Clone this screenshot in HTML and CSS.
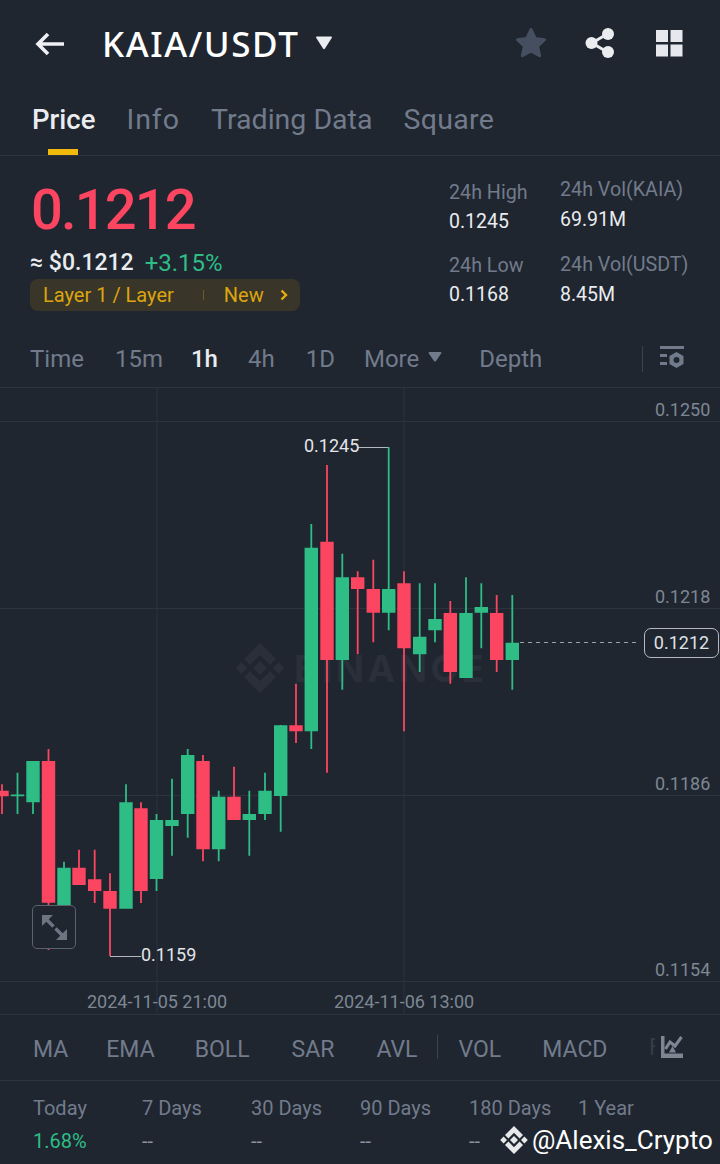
FILE: index.html
```html
<!DOCTYPE html>
<html lang="en">
<head>
<meta charset="utf-8">
<title>KAIA/USDT</title>
<link rel="stylesheet" href="styles.css">
</head>
<body>
<main class="app">
  <header class="topbar">
    <svg class="back" viewBox="0 0 30 24" width="30" height="24"><path d="M29 12H3M13 2 3 12l10 10" /></svg>
    <h1 class="pair">KAIA/USDT</h1>
    <svg class="pair-caret" viewBox="0 0 18 14" width="18" height="14"><path d="M1 1.500Q1 .5 2 .5H16Q17 .5 17 1.500L10 12.500Q9 14 8 12.500Z"/></svg>
    <div class="top-icons">
      <svg class="ic-star" viewBox="0 0 32 32" width="32" height="32"><path d="M16 2.500l4.200 8.900 9.300 1.300-6.900 6.500 2 9.600-8.600-4.900-8.600 4.900 2-9.600-6.900-6.500 9.300-1.300z"/></svg>
      <svg class="ic-share" viewBox="0 0 30 32" width="30" height="32"><path class="ln" d="M7 16 23 6.500M7 16l16 9.500"/><circle cx="6.500" cy="16" r="6"/><circle cx="23" cy="7" r="6"/><circle cx="23" cy="25" r="6"/></svg>
      <svg class="ic-grid" viewBox="0 0 28 28" width="28" height="28"><path d="M1 1h12v12H1zM15.500 1h12v12h-12zM1 15.500h12v12H1zM15.500 15.500h12v12h-12z"/></svg>
    </div>
  </header>

  <nav class="tabs">
    <span class="tab tab-on">Price</span>
    <span class="tab tab-info">Info</span>
    <span class="tab tab-data">Trading Data</span>
    <span class="tab tab-square">Square</span>
  </nav>

  <section class="summary">
    <div class="sum-left">
      <div class="last">0.1212</div>
      <div class="fiat"><span>≈ $0.1212</span><span class="pct">+3.15%</span></div>
      <div class="tag"><span>Layer 1 / Layer</span><i class="tag-sep"></i><span class="tag-new">New</span>
        <svg class="tag-chev" viewBox="0 0 8 12" width="8" height="12"><path d="M1.500 1.500 6 6l-4.500 4.500"/></svg></div>
    </div>
    <div class="stats">
      <div class="stat-col stat-col-a">
        <div class="stat"><span class="stat-k">24h High</span><span class="stat-v">0.1245</span></div>
        <div class="stat"><span class="stat-k">24h Low</span><span class="stat-v">0.1168</span></div>
      </div>
      <div class="stat-col stat-col-b">
        <div class="stat"><span class="stat-k">24h Vol(KAIA)</span><span class="stat-v">69.91M</span></div>
        <div class="stat"><span class="stat-k">24h Vol(USDT)</span><span class="stat-v">8.45M</span></div>
      </div>
    </div>
  </section>

  <nav class="intervals">
    <span class="iv iv-time">Time</span>
    <span class="iv iv-15">15m</span>
    <span class="iv iv-1h iv-on">1h</span>
    <span class="iv iv-4h">4h</span>
    <span class="iv iv-1d">1D</span>
    <span class="iv iv-more">More</span>
    <svg class="iv-caret" viewBox="0 0 14 10" width="14" height="10"><path d="M.500 1Q.500 0 1.500 0h11q1 0 1 1L8 9q-1 1-2 0z"/></svg>
    <span class="iv iv-depth">Depth</span>
    <i class="iv-sep"></i>
    <svg class="iv-set" viewBox="0 0 24 26" width="24" height="26"><path d="M0 0h24v3H0zM0 8h7v3H0zM0 16h7v3H0z"/><path fill-rule="evenodd" d="M16.500 6 23.500 10v8l-7 4-7-4v-8zM16.500 11a3 3 0 1 0 0 6 3 3 0 0 0 0-6z"/></svg>
  </nav>

  <section class="chart">
    <svg class="plot" viewBox="0 388 720 626" width="720" height="626">
      <path class="grid" d="M0 421.500H720M0 608.500H720M0 795.500H720M0 981.500H720M157 388V1014M404 388V1014"/>
      <g class="mark">
        <path d="M260 643l16 16-6 6-10-10-10 10-6-6zM260 693l16-16-6-6-10 10-10-10-6 6zM241.500 662l6 6-6 6-6-6zM278.500 662l6 6-6 6-6-6zM260 661l7 7-7 7-7-7z"/>
        <text x="294" y="682" class="mark-t">BINANCE</text>
      </g>
      <path class="wick up" d="M17.500 772.700V814M33 761V814M64 861.700V905M126 784.300V908M156.500 814V891M172 778.700V855.700M187.700 749V837.700M218.700 790.700V861.300M249.300 790.700V855.700M265 772.700V820M280.700 725V831.700M311.300 524V749M342.300 553.700V689.700M388.700 447V630.300M419.700 583.300V672M435 583.300V642.300M466 577.300V678M481.300 583.300V648.300M512.300 595V689.700"/>
      <path class="wick down" d="M2 784.300V814M48.500 749V950M79 849.700V885M94.700 849.700V903M110 873.300V956M141 802.300V903M203 755V861.300M234 766.700V820M296 683.700V743M327 465V772.700M357.700 571.300V654.300M373.300 559.700V642.300M404 571.300V731.300M450.300 601V683.700M496.700 595V672"/>
      <path class="body up" d="M17.500 794.500V796.300M33 761V802.300M64 867.700V905M126 802.300V908.700M156.500 820V879M172 820V826M187.700 755V814M218.700 796.700V849.300M249.300 814V820M265 790.700V814M280.700 725.300V796M311.300 547.700V731.300M342.300 577.300V660M388.700 589V612.700M419.700 636.700V654.300M435 619V630.300M466 613V678M481.300 607V612.700M512.300 642.700V660"/>
      <path class="body down" d="M2 790.700V796.300M48.500 761V902.700M79 867.700V885M94.700 879.300V891M110 891V908.700M141 808.300V891M203 761V849.300M234 796.700V820M296 725.300V731.300M327 541.700V660M357.700 577.300V589M373.300 589V612.700M404 583.300V648.300M450.300 613V672M496.700 613V660"/>
      <path class="lead" d="M358 447.500H388M110 956.500H141"/>
      <path class="dash" d="M520 642.500H636"/>
      <text class="hl" x="304" y="452">0.1245</text>
      <text class="hl" x="141" y="961">0.1159</text>
      <text class="axis" x="655" y="415.500">0.1250</text>
      <text class="axis" x="655" y="602.500">0.1218</text>
      <text class="axis" x="655" y="789.500">0.1186</text>
      <text class="axis" x="655" y="975.500">0.1154</text>
      <text class="axis" x="87" y="1008">2024-11-05 21:00</text>
      <text class="axis" x="334" y="1008">2024-11-06 13:00</text>
    </svg>
    <div class="price-tag">0.1212</div>
    <div class="expand">
      <svg viewBox="0 0 25 25" width="25" height="25"><path d="M0 0h11L0 11z"/><path d="M25 25H14l11-11z"/><path class="expand-stem" d="M4 4 11.500 11.500M21 21l-7.500-7.500"/></svg>
    </div>
  </section>

  <nav class="indicators">
    <span class="ind ind-ma">MA</span>
    <span class="ind ind-ema">EMA</span>
    <span class="ind ind-boll">BOLL</span>
    <span class="ind ind-sar">SAR</span>
    <span class="ind ind-avl">AVL</span>
    <i class="ind-sep"></i>
    <span class="ind ind-vol">VOL</span>
    <span class="ind ind-macd">MACD</span>
    <span class="ind ind-fade">F</span>
    <svg class="ind-ic" viewBox="0 0 22 22" width="22" height="22"><path d="M0 0h3.500v17.500H22V22H0z"/><path d="M8 16.500 11.500 10l3.500 6.500z"/><path class="ind-zig" d="M4.500 13 9 6l5 4 6.500-9"/></svg>
  </nav>

  <section class="perf">
    <div class="perf-col"><span class="perf-k">Today</span><span class="perf-v perf-up">1.68%</span></div>
    <div class="perf-col"><span class="perf-k">7 Days</span><span class="perf-v">--</span></div>
    <div class="perf-col"><span class="perf-k">30 Days</span><span class="perf-v">--</span></div>
    <div class="perf-col"><span class="perf-k">90 Days</span><span class="perf-v">--</span></div>
    <div class="perf-col"><span class="perf-k">180 Days</span><span class="perf-v">--</span></div>
    <div class="perf-col"><span class="perf-k">1 Year</span></div>
  </section>

  <div class="credit">
    <svg viewBox="0 0 28 28" width="28" height="28"><path d="M14 0l9 9-3.400 3.400L14 6.800l-5.600 5.600L5 9zM14 28l9-9-3.400-3.400L14 21.200l-5.600-5.600L5 19zM3.600 10.600 7 14l-3.400 3.400L.2 14zM24.400 10.600 27.800 14l-3.400 3.400L21 14zM14 10l4 4-4 4-4-4z"/></svg>
    <span>@Alexis_Crypto</span>
  </div>
</main>
</body>
</html>
```
FILE: styles.css
```css
* { box-sizing: border-box; }
html, body { margin: 0; padding: 0; background: #1f2630; }
body { font-family: Roboto, "Noto Sans", sans-serif; color: #eaecef; }
.app { position: relative; width: 720px; height: 1164px; overflow: hidden; display: flex; flex-direction: column; background: #1f2630; }

.topbar { height: 88px; display: flex; align-items: center; padding-left: 35px; flex: none; }
.back { flex: none; }
.back path { fill: none; stroke: #eef0f3; stroke-width: 3.6; }
.pair { margin: -2px 0 0 37px; font-family: "Noto Sans", Roboto, sans-serif; font-size: 35px; font-weight: 500; letter-spacing: 1.600px; color: #fff; line-height: 1; white-space: nowrap; }
.pair-caret { margin-left: 15px; fill: #eaecef; margin-top: -3px; }
.top-icons { margin-left: auto; display: flex; align-items: center; padding-right: 37px; gap: 38px; margin-top: -2px; }
.ic-star { fill: #454f60; stroke: #454f60; stroke-width: 3; stroke-linejoin: round; }
.ic-share { fill: #eaecef; }
.ic-share .ln { fill: none; stroke: #eaecef; stroke-width: 3; }
.ic-grid { fill: #e6e8ee; margin-left: 2px; }

.tabs { height: 68px; flex: none; display: flex; padding: 14px 0 0 32px; border-bottom: 1px solid #2c333f; position: relative; }
.tab { font-size: 28.500px; line-height: 36px; color: #727b8b; font-weight: 400; }
.tab-on { color: #eaecef; font-weight: 500; font-size: 27.500px; position: relative; }
.tab-on::after { content: ""; position: absolute; left: 16px; top: 47px; width: 30px; height: 6px; background: #f0b90b; }
.tab-info { margin-left: 31px; letter-spacing: 1px; }
.tab-data { margin-left: 31px; }
.tab-square { margin-left: 31px; letter-spacing: .3px; }

.summary { height: 179px; flex: none; display: flex; justify-content: space-between; padding: 0 0 0 30px; }
.sum-left { width: 400px; }
.last { font-size: 56px; font-weight: 500; line-height: 60px; color: #fc4560; margin: 24px 0 0 1px; letter-spacing: -1.8px; }
.fiat { display: flex; gap: 11px; font-size: 23px; line-height: 28px; margin-top: 9px; font-weight: 500; color: #eaecef; }
.pct { color: #2ebd85; font-weight: 400; font-size: 24px; }
.tag { width: 270px; height: 32px; margin-top: 2px; border-radius: 8px; background: #393529; color: #dca50e; font-size: 20px; display: flex; align-items: center; padding-left: 13px; }
.tag-sep { width: 1px; height: 10px; background: #6b5c22; margin: 0 20px 0 29px; }
.tag-chev { margin-left: 16px; fill: none; stroke: #e6ac0e; stroke-width: 2.400; }

.stats { display: flex; width: 271px; padding-top: 21px; }
.stat-col { display: flex; flex-direction: column; }
.stat-col-a { width: 111px; padding-top: 4px; gap: 19px; }
.stat-col-b { gap: 20px; padding-top: 1px; }
.stat { display: flex; flex-direction: column; }
.stat-col-a .stat { gap: 4px; }
.stat-col-b .stat { gap: 5px; }
.stat-k { font-size: 19.700px; line-height: 24px; color: #727b8b; white-space: nowrap; }
.stat-v { font-size: 19.500px; line-height: 26px; color: #eaecef; font-weight: 400; }

.intervals { height: 53px; flex: none; display: flex; align-items: center; border-bottom: 1px solid #2c333f; padding: 0 0 4px 30px; }
.iv { font-size: 24px; color: #727b8b; line-height: 30px; }
.iv-on { color: #eaecef; font-weight: 500; }
.iv-15 { margin-left: 31px; }
.iv-1h { margin-left: 28px; }
.iv-4h { margin-left: 30px; }
.iv-1d { margin-left: 31px; }
.iv-more { margin-left: 29px; }
.iv-caret { margin: -4px 0 0 9px; fill: #727b8b; }
.iv-depth { margin-left: 37px; }
.iv-sep { width: 1px; height: 26px; background: #3b4350; margin-left: 100px; }
.iv-set { margin-left: 17px; fill: #727b8b; }

.chart { position: relative; height: 626px; flex: none; }
.plot { display: block; }
.grid { fill: none; stroke: #2c333f; stroke-width: 1; }
.mark { fill: #2a2f3a; }
.mark-t { font-size: 37px; font-weight: 700; font-family: Inter, Roboto, sans-serif; letter-spacing: 3.500px; }
.wick { fill: none; stroke-width: 1.800; }
.body { fill: none; stroke-width: 13.400; }
.up { stroke: #2ebd85; }
.down { stroke: #fc4560; }
.lead { fill: none; stroke: #b3b8c1; stroke-width: 1; }
.dash { fill: none; stroke: #9aa0aa; stroke-width: 1; stroke-dasharray: 4 4; }
.hl { font-size: 18px; fill: #e3e5e9; }
.axis { font-size: 18px; fill: #7e8693; }
.price-tag { position: absolute; left: 644px; top: 240px; width: 75px; height: 30px; border: 1.500px solid #b4b9c1; border-radius: 7px; background: #1f2630; color: #dfe2e6; font-size: 18px; text-align: center; line-height: 27px; }
.expand { position: absolute; left: 32px; top: 517px; width: 44px; height: 44px; border: 1.500px solid #5a6270; border-radius: 5px; background: #1f2630; display: flex; align-items: center; justify-content: center; }
.expand svg { fill: #6d7583; }
.expand-stem { fill: none; stroke: #6d7583; stroke-width: 3.500; }

.indicators { height: 67px; flex: none; display: flex; align-items: center; position: relative; border-top: 1px solid #2c333f; border-bottom: 1px solid #2c333f; padding: 3px 0 0 33px; }
.ind { font-size: 23px; color: #727b8b; }
.ind-ema { margin-left: 38px; }
.ind-boll { margin-left: 40px; }
.ind-sar { margin-left: 42px; }
.ind-avl { margin-left: 42px; }
.ind-sep { width: 1px; height: 24px; background: #3b4350; margin: -5px 21px 0 19px; }
.ind-macd { margin-left: 41px; }
.ind-fade { position: absolute; left: 649px; top: 19px; width: 6px; overflow: hidden; color: #363c48; }
.ind-ic { position: absolute; left: 661px; top: 21px; fill: #7e8693; }
.ind-zig { fill: none; stroke: #7e8693; stroke-width: 3; }

.perf { flex: 1; display: grid; grid-template-columns: repeat(6, 109px); padding: 15px 0 0 33px; }
.perf-col { display: flex; flex-direction: column; gap: 9px; }
.perf-k { font-size: 20px; line-height: 24px; color: #727b8b; }
.perf-v { font-size: 20px; line-height: 24px; color: #8b93a0; }
.perf-up { color: #2ebd85; }

.credit { position: absolute; left: 500px; top: 1125px; display: flex; align-items: center; gap: 4px; color: #fff; font-size: 26px; line-height: 30px; }
.credit svg { fill: #e6e8ea; }
```
